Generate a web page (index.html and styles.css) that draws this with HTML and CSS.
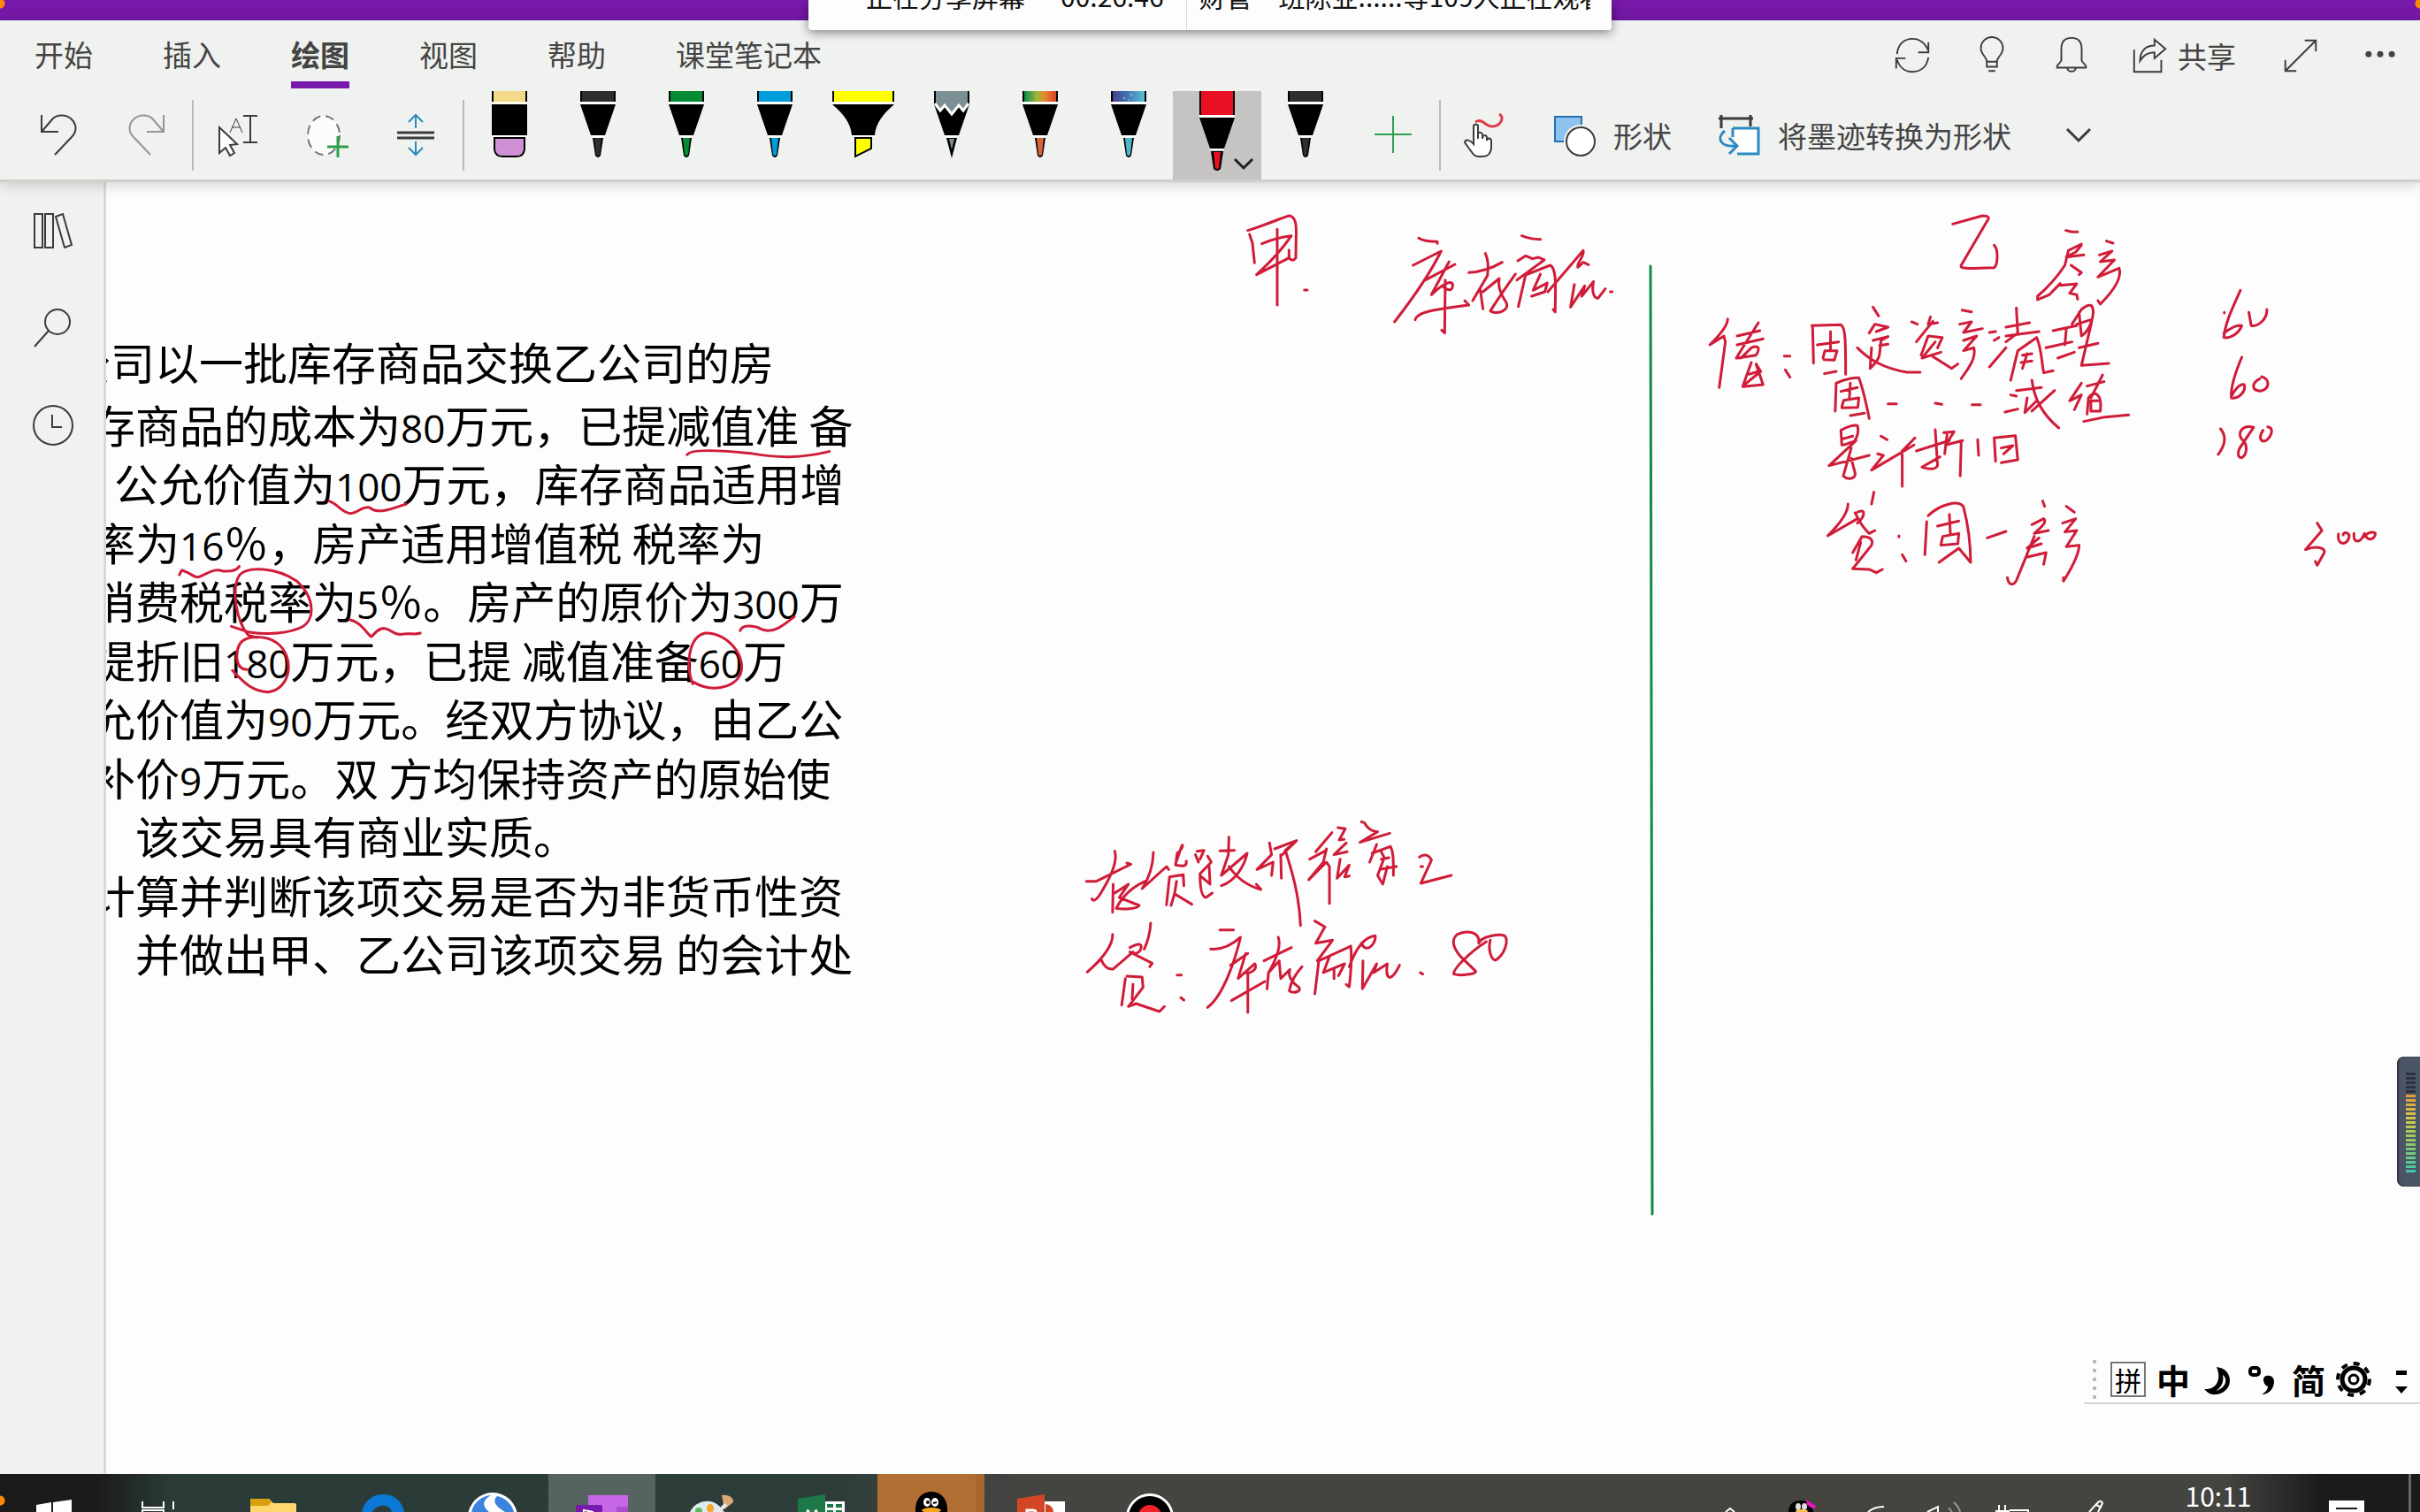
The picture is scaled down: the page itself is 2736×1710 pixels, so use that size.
FILE: index.html
```
<!DOCTYPE html>
<html lang="zh-CN">
<head>
  <meta charset="UTF-8" />
  <meta name="viewport" content="width=device-width, initial-scale=1.0"/>
  <title>OneNote</title>
  <link rel="stylesheet" href="styles.css">
</head>
<body>
  <!-- Shared shapes -->
  <svg class="defs" width="0" height="0">
    <defs>
      <linearGradient id="rainbow"><stop offset="0" stop-color="#0c8a4a"/><stop offset=".4" stop-color="#9fb83a"/><stop offset=".65" stop-color="#e8862c"/><stop offset="1" stop-color="#d8452a"/></linearGradient>
      <linearGradient id="galaxy"><stop offset="0" stop-color="#4a3f8c"/><stop offset=".4" stop-color="#3e6fb0"/><stop offset="1" stop-color="#5cc0d2"/></linearGradient>
      <symbol id="pen" viewBox="0 0 100 100">
        <path d="M30 0H70V12H30Z" fill="#000"/><path d="M32 0H68V12H32Z" fill="currentColor"/>
        <path d="M30 12H70V15H30Z" fill="#fff"/>
        <path d="M30 15H70L58 50H42Z" fill="#000"/>
        <path d="M42 50H58V52H42Z" fill="#fff"/>
        <path d="M44 53H56L53 73Q50 77 47 73Z" fill="#000"/><path d="M46 53H54L52 72Q50 74 48 72Z" fill="currentColor"/>
      </symbol>
    </defs>
  </svg>

  <div class="title-bar"></div>

  <!-- Screen sharing notice -->
  <div class="share-notice">
    <div class="share-text">
      <span>正在分享屏幕</span>
      <span class="share-time">00:26:46</span>
      <span class="share-viewers">财管一班陈业......等109人正在观看</span>
    </div>
  </div>

  <header class="ribbon">
    <div class="tabs">
      <nav class="tab-list">
        <button class="tab">开始</button>
        <button class="tab">插入</button>
        <button class="tab active">绘图</button>
        <button class="tab">视图</button>
        <button class="tab">帮助</button>
        <button class="tab">课堂笔记本</button>
      </nav>
      <div class="tab-actions">
        <button class="action" aria-label="同步"><svg class="icon" viewBox="0 0 48 48"><path d="M6 22C7 10 15 4 24 4C32 4 39 9 43 18M43 8V20H31M43 26C41 38 33 43 24 43C16 43 9 38 6 29M5 39V27H16"/></svg></button>
        <button class="action" aria-label="操作说明"><svg class="icon" viewBox="0 0 48 48"><path d="M18 31C18 25 11 23 11 15A13 13 0 0 1 37 15C37 23 30 25 30 31V37H18ZM18 31H30M20 42H28"/></svg></button>
        <button class="action" aria-label="通知"><svg class="icon" viewBox="0 0 48 48"><path d="M7 38V36L12 30V16C12 7 17 3 24 3S36 7 36 16V30L41 36V38ZM19 38C19 44 29 44 29 38"/></svg></button>
        <button class="share"><svg class="icon" viewBox="0 0 48 48"><path d="M5 17V43H37V29M12 30C12 17 20 12 29 12V5L42 16L29 27V20C21 20 16 23 12 30Z"/></svg>共享</button>
        <button class="action" aria-label="全屏"><svg class="icon" viewBox="0 0 48 48"><path d="M6 42L42 6M29 6H42V19M6 29V42H19"/></svg></button>
        <button class="action more" aria-label="更多"><svg class="icon solid" viewBox="0 0 48 48"><circle cx="9" cy="22" r="4"/><circle cx="24" cy="22" r="4"/><circle cx="39" cy="22" r="4"/></svg></button>
      </div>
    </div>

    <div class="tools">
      <button class="tool" aria-label="撤消"><svg class="icon" viewBox="0 0 48 48"><path d="M5 1V20H24M5 20L17 6C22 0 33 0 39 6C45 12 45 20 39 26L20 46"/></svg></button>
      <button class="tool dim" aria-label="恢复"><svg class="icon" viewBox="0 0 48 48"><path d="M43 1V20H24M43 20L31 6C26 0 15 0 9 6C3 12 3 20 9 26L28 46"/></svg></button>
      <span class="divider"></span>
      <button class="tool" aria-label="选择文本"><svg class="icon" viewBox="0 0 48 48"><path d="M29 2H45M29 32H45M37 2V32"/><path class="thin" d="M14 21L21 5L28 21M16 15H26"/><path fill="#fff" d="M2 15V44L9 38L14 47L19 44L14 35L22 34Z"/></svg></button>
      <button class="tool" aria-label="套索选择"><svg class="icon" viewBox="0 0 48 48"><ellipse cx="20" cy="24" rx="18" ry="22" fill="#fbfcfb" stroke="#777" stroke-dasharray="10 6"/><path d="M24 37H48M36 25V49" stroke="#2f9e4f" stroke-width="3"/></svg></button>
      <button class="tool" aria-label="插入空间"><svg class="icon" viewBox="0 0 48 48"><path d="M3 21H45M3 27H45" stroke-width="3"/><path d="M24 16V1M16 9L24 1L32 9M24 31V46M16 38L24 46L32 38" stroke="#2a8bc0"/></svg></button>
      <span class="divider pens-start"></span>

      <button class="pen" aria-label="橡皮擦"><svg viewBox="0 0 100 100"><path d="M30 0H70V12H30Z"/><path d="M32 0H68V12H32Z" fill="#f5d98b"/><path d="M30 12H70V15H30Z" fill="#fffbe6"/><path d="M30 15H70V50H30Z"/><path d="M30 50H70V52H30Z" fill="#fff"/><path d="M33 53H67V66Q66 74 58 74H42Q34 74 33 66Z" fill="#cf8fd4" stroke="#000" stroke-width="2"/></svg></button>
      <button class="pen black" aria-label="黑色笔"><svg><use href="#pen"/></svg></button>
      <button class="pen green" aria-label="绿色笔"><svg><use href="#pen"/></svg></button>
      <button class="pen blue" aria-label="蓝色笔"><svg><use href="#pen"/></svg></button>
      <button class="pen" aria-label="荧光笔"><svg viewBox="0 0 100 100"><path d="M15 0H85V12H15Z"/><path d="M17 0H83V12H17Z" fill="#ff0"/><path d="M15 12H85V15H15Z" fill="#fff"/><path d="M15 15H85C72 26 64 37 63 50H37C36 37 28 26 15 15Z"/><path d="M37 50H63V52H37Z" fill="#fff"/><path d="M41 53H59V65L41 74Z" fill="#ff0" stroke="#000" stroke-width="2"/></svg></button>
      <button class="pen" aria-label="铅笔"><svg viewBox="0 0 100 100"><path d="M30 0H70V15L58 50H42L30 15Z"/><path d="M32 0H68V15L62 23L58 16L50 27L42 16L38 23L32 15Z" fill="#7c8f94"/><path d="M31 14L37 22L42 16L50 26L58 16L63 22L69 14" fill="none" stroke="#fff" stroke-width="3"/><path d="M42 50H58V52H42Z" fill="#fff"/><path d="M44 53H56L50 76Z"/><path d="M47 54H53L50 66Z" fill="#7c8f94"/></svg></button>
      <button class="pen" aria-label="彩虹笔"><svg class="rainbow"><use href="#pen"/></svg><svg class="cap" viewBox="0 0 36 12"><path d="M0 0H36V12H0Z" fill="url(#rainbow)"/></svg></button>
      <button class="pen" aria-label="银河笔"><svg class="galaxy"><use href="#pen"/></svg><svg class="cap" viewBox="0 0 36 12"><path d="M0 0H36V12H0Z" fill="url(#galaxy)"/><path d="M12 8h2M20 4h2M17 10h1" stroke="#fff"/></svg></button>
      <button class="pen selected" aria-label="红色笔"><svg viewBox="0 0 100 100"><path d="M30 0H70V27H30Z"/><path d="M32 0H68V27H32Z" fill="#e81123"/><path d="M30 27H70V30H30Z" fill="#fff"/><path d="M30 30H70L58 65H42Z"/><path d="M42 65H58V67H42Z" fill="#fff"/><path d="M43 68H57L54 88Q50 92 46 88Z"/><path d="M46 69H54L52 87Q50 89 48 87Z" fill="#e81123"/><path d="M70 77L80 87L90 77" fill="none" stroke="#222" stroke-width="3"/></svg></button>
      <button class="pen black" aria-label="黑色笔"><svg><use href="#pen"/></svg></button>
      <button class="tool" aria-label="添加笔"><svg class="icon" viewBox="0 0 48 48"><path d="M2 23H44M23 2V44" stroke="#2f9e4f"/></svg></button>
      <span class="divider"></span>
      <button class="tool" aria-label="使用触摸绘制"><svg class="icon" viewBox="0 0 48 48"><path fill="#fff" d="M10 34V14C10 11 15 11 15 14V28V23C15 20 20 20 20 24V28C20 23 25 23 25 27V30C26 26 30 27 30 31V37C30 44 26 48 20 48H16C10 48 8 43 5 39L0 32C1 28 6 29 10 34Z"/><path d="M12 9C20 4 23 14 31 14C40 14 46 4 39 0" stroke="#e03c4c" stroke-width="3"/></svg></button>
      <button class="text-tool"><svg class="icon" viewBox="0 0 48 48"><path d="M2 3H32V31H2Z" fill="#8cc3ef" stroke="#2470b0"/><circle cx="31" cy="31" r="19" fill="#f0f2ef" stroke="none"/><circle cx="31" cy="31" r="16" fill="#fff"/></svg>形状</button>
      <button class="text-tool convert"><svg class="icon" viewBox="0 0 48 48"><path d="M4 1V16M37 1V14M1 5H40" stroke-width="3"/><path d="M17 16H46V45H22M17 16V26" fill="#fff" stroke="#2a8bc0" stroke-width="3"/><path d="M8 19C-2 27 3 38 21 36M13 27L22 36L13 45" stroke="#2a8bc0" stroke-width="3"/></svg>将墨迹转换为形状</button>
      <button class="tool" aria-label="更多工具"><svg class="icon" viewBox="0 0 48 48"><path d="M11 17L24 30L37 17" stroke-width="3"/></svg></button>
    </div>
  </header>

  <main class="workspace">
    <nav class="sidebar">
      <button class="side-button" aria-label="笔记本"><svg class="icon" viewBox="0 0 48 48"><path d="M3 5H12V43H3ZM15 5H24V43H15ZM27 8L35 5L45 40L37 43Z"/></svg></button>
      <button class="side-button" aria-label="搜索"><svg class="icon" viewBox="0 0 48 48"><circle cx="29" cy="17" r="14"/><path d="M19 27L3 45"/></svg></button>
      <button class="side-button" aria-label="最近的笔记"><svg class="icon" viewBox="0 0 48 48"><circle cx="24" cy="24" r="22"/><path d="M23 12V26H34"/></svg></button>
    </nav>

    <section class="page">
      <article class="note">
        <p class="lead">公司以一批库存商品交换乙公司的房</p>
        <p>存商品的成本为<span class="num">80</span>万元，已提减值准 备</p>
        <p class="half-indent">公允价值为<span class="num">100</span>万元，库存商品适用增</p>
        <p>率为<span class="num">16</span>％，房产适用增值税 税率为</p>
        <p>消费税税率为<span class="num">5</span>％。房产的原价为<span class="num">300</span>万</p>
        <p>提折旧<span class="num">180</span>万元，已提 减值准备<span class="num">60</span>万</p>
        <p>允价值为<span class="num">90</span>万元。经双方协议，由乙公</p>
        <p>补价<span class="num">9</span>万元。双 方均保持资产的原始使</p>
        <p class="indent">该交易具有商业实质。</p>
        <p>计算并判断该项交易是否为非货币性资</p>
        <p class="indent">并做出甲、乙公司该项交易 的会计处</p>
      </article>

      <!-- Ink layer -->
      <svg class="ink" viewBox="120 206 2616 1461" width="2616" height="1461">
        <path class="green-ink" d="M1866 301L1867 800L1868 1373"/>

        <!-- marks over the note -->
        <g transform="translate(0 200) scale(.6378 .3333)">
          <path d="M1218 943C1225 920 1290 930 1330 938C1380 955 1420 955 1470 932"/>
          <path d="M583 1100C600 1110 605 1140 622 1142C635 1140 640 1118 655 1122C670 1145 690 1130 720 1110"/>
          <path d="M318 1350L322 1335C335 1340 345 1362 352 1358C370 1345 380 1326 395 1338C410 1340 420 1335 424 1322"/>
        </g>
        <g transform="translate(0 640) scale(.6378 .3333)">
          <path d="M410 205L430 218C450 234 500 235 530 212C560 190 560 110 525 50C490 5 440 0 425 30C408 80 420 190 440 235L455 243"/>
          <path d="M620 183C640 190 650 230 658 240C665 230 670 210 682 212C695 215 695 235 712 232C722 226 735 235 745 228"/>
          <path d="M1312 220C1315 200 1335 200 1350 215C1370 232 1390 200 1408 172"/>
          <path d="M438 352C415 350 418 290 425 265C435 235 470 235 490 260C525 310 515 420 475 428C445 425 430 390 412 355"/>
          <path d="M1228 400C1215 340 1220 240 1250 228C1290 225 1325 310 1312 370C1300 415 1260 430 1230 395"/>
        </g>

        <!-- left column heading -->
        <g transform="translate(1380 220) scale(.3333)">
          <path d="M92 122C150 105 190 85 232 72C255 75 258 100 256 150L255 215C247 227 240 224 232 215"/>
          <path d="M98 135L108 165L115 232M140 167Q190 145 240 140Q200 200 122 272L232 215V188M192 118V375M284 324h10"/>
          <path d="M672 148Q690 160 735 160V166M653 240L748 192Q700 290 590 432M695 290L795 237M775 228L715 340C750 305 790 285 787 310C785 330 770 324 758 316M762 290L760 470L750 460M660 425C665 400 720 390 842 375L828 360"/>
          <path d="M842 265Q900 262 955 230M898 200Q912 230 905 275L855 360L880 318L890 388M945 285Q938 320 965 360C990 395 930 410 915 395Q950 340 1000 270M890 330L945 285"/>
          <path d="M1022 140Q1050 152 1085 152M1008 225L1035 208L1058 218L1078 213L1098 222L1005 290M1035 270L1010 380M1030 275L1118 240C1142 250 1135 330 1135 398L1128 390M1085 270L1060 325L1108 300L1100 330L1055 345"/>
          <path d="M1110 330L1230 190C1235 210 1205 235 1212 247L1230 230L1248 238M1200 305L1187 382L1235 310L1225 345L1265 295C1258 325 1265 352 1280 352L1305 320M1322 330h6"/>
        </g>

        <!-- right column entries -->
        <g transform="translate(1900 220) scale(.5332 .3333)">
          <path d="M577 100L640 72C655 72 655 80 650 90L595 240C593 252 600 252 665 248C672 240 675 190 665 172"/>
          <path d="M817 122L830 127H842M850 168L822 190M850 172L838 195L818 212L855 205M822 192L815 240Q790 300 757 345V357L782 340L805 302M828 240L850 265L845 272M805 308L840 303L825 335L840 340L842 355"/>
          <path d="M903 158L917 165M888 205L915 192L890 228L920 222L885 280L930 250C938 290 910 340 890 372L885 360"/>
          <path d="M100 422Q100 450 62 510L92 480L95 500L82 655M120 480L168 462M118 555L165 435M120 510L175 490M128 555L150 520C165 510 170 520 160 545L120 555M150 570L132 650L170 600L160 575L175 645L132 652M145 610L165 600M220 548h12M222 595L232 620"/>
          <path d="M280 450L282 572M278 445L340 442C350 450 350 500 350 610M290 510L335 500M318 465V525M302 555L306 530H332L326 562L304 560M305 608L330 600"/>
          <path d="M408 382L420 412M400 470L412 440L440 450L415 465M408 495L440 482L425 495L422 540M422 512L440 508M405 520L402 590C415 570 422 550 422 540M375 520C400 560 430 590 480 603H508"/>
          <path d="M490 432L502 440M530 415L525 440L545 435M535 430L500 500M510 545L525 480L555 485L545 520M540 500L512 555L552 535M535 550L575 590L588 575"/>
          <path d="M597 392L617 398M592 440L617 432L600 468L640 455M600 495L628 480L600 530L622 520C628 560 605 600 595 625"/>
          <path d="M655 468L668 465M665 495L675 485M655 585L690 520M690 450L740 435M712 385L715 470L690 500M690 480L760 465M700 630L715 530L755 485C765 520 765 560 770 605L790 598M725 545L745 540M722 570L745 565M725 590L735 540"/>
          <path d="M790 462L840 445M818 455L815 510M775 520L830 500M800 555L835 535M830 440L850 390Q865 370 872 378C880 400 870 460 850 480L845 400M840 440L870 425M845 520L885 505M872 430L850 580L908 573"/>
          <path d="M1187 325C1175 370 1155 430 1152 485C1165 490 1185 470 1190 445C1180 440 1165 455 1152 470M1153 400V402M1205 400L1210 445C1225 450 1245 420 1243 390"/>

          <path d="M330 640L328 735M330 640C350 625 370 620 378 622C385 650 395 720 400 760M340 668L375 655M360 640L358 690M342 720L346 698L378 690L376 722L342 724M360 750L390 742M440 710h18M540 708l14 4M618 713h18"/>
          <path d="M700 680L712 684M688 738L715 728M712 665L765 655M735 690L730 740L755 700M745 630C750 700 770 750 802 792M793 665L745 735"/>
          <path d="M850 640L825 700L850 680L835 730M862 650L898 635M895 612L870 690M862 745L865 690C875 665 895 670 890 735L870 735V700H885M855 770L900 755L950 748"/>
          <path d="M1190 552C1180 590 1165 650 1168 690C1185 695 1200 665 1195 645C1185 640 1172 670 1170 680M1228 625C1210 640 1210 665 1230 667C1250 660 1250 625 1232 618"/>

          <path d="M340 800L342 850M340 800C355 785 372 780 375 785C380 810 370 840 362 850M342 830L365 820M345 850L372 835L315 920L400 885M362 860L345 955C355 970 372 965 370 945L362 895"/>
          <path d="M425 820L438 832M418 880L430 885L405 935L495 850M497 826L470 870V990M500 870L570 835M540 798L545 920C540 935 525 932 512 925L550 890"/>
          <path d="M558 808L580 805L562 850L598 835M565 815L560 880M595 840L593 955M630 832L632 885M665 825L668 905M668 825L710 818L715 900L680 910M680 860L705 852L685 880"/>
          <path d="M1145 795C1158 820 1155 850 1140 882M1215 790C1190 780 1180 810 1190 830C1205 850 1200 885 1190 893C1180 893 1180 870 1190 850L1215 790M1235 800C1225 825 1230 840 1240 836C1255 820 1258 790 1245 788"/>

          <path d="M355 1050Q355 1090 312 1158L375 1100M375 1078C390 1065 395 1085 375 1115M370 1080Q385 1130 400 1150L412 1140M410 1010L405 1050M365 1215L385 1160C400 1160 410 1170 405 1190L365 1270L400 1272L415 1283L428 1272M382 1180L372 1240M463 1158v4M470 1222l8 22"/>
          <path d="M522 1110L518 1222M525 1090C550 1050 590 1035 600 1060C608 1110 615 1180 615 1248L590 1200L548 1248M545 1125L590 1108M570 1085L572 1150M552 1188L556 1160L590 1150L588 1185L552 1190M650 1165L690 1143"/>
          <path d="M768 1040L772 1058M745 1120L770 1100C778 1110 765 1130 750 1150L780 1140M760 1165L735 1200L765 1185M750 1160L712 1310C705 1330 695 1325 693 1300M735 1230L775 1215L770 1255"/>
          <path d="M818 1058L835 1078M810 1115L838 1100L815 1145L840 1140L818 1195L845 1190C845 1230 820 1290 812 1312V1300"/>
          <path d="M1350 1115L1360 1140L1325 1205C1350 1190 1368 1200 1365 1215L1350 1258L1346 1245M1395 1152C1390 1190 1415 1195 1418 1158C1415 1145 1405 1145 1405 1155M1428 1150C1425 1185 1442 1185 1450 1150C1458 1185 1475 1165 1473 1148C1462 1142 1455 1150 1448 1162"/>
        </g>

        <!-- lower notes -->
        <g transform="translate(1200 900) scale(.3444 .3333)">
          <path d="M82 290H115L228 232L215 228M175 188Q188 230 135 320C120 350 105 362 100 350M170 300L168 395M175 330L220 300L190 345L255 372C250 385 200 385 180 382Q210 320 275 290"/>
          <path d="M302 192Q300 260 265 315L345 240L352 250M375 230L395 170C400 160 400 180 380 195L375 235C400 240 412 240 410 222M355 275L345 370M355 275L400 268L402 305M378 290L372 330L360 372M375 335L428 368"/>
          <path d="M440 200L450 225M445 188L468 185L455 215M480 205L492 225L455 265C455 310 460 345 475 345L495 330M485 240L488 300L460 275"/>
          <path d="M520 187L568 185M550 140L548 200L525 270L610 195C600 240 570 290 525 305M550 240Q590 300 655 318L640 300"/>
          <path d="M683 160L690 200L642 250L695 225L690 270M720 200L722 280M700 180L772 152L725 200M770 155L735 185C755 250 780 330 785 440"/>
          <path d="M815 215L870 185M888 125L835 190M870 180L860 225L812 285L870 225L880 240V365M908 108L932 112L912 150L928 148M935 160L895 200L938 190M915 215L905 280L945 235L930 275L945 272"/>
          <path d="M985 88L995 92Q1010 120 1038 122L980 158L1078 127M1035 165L1012 225M1020 195L1080 172C1090 190 1090 220 1090 270M1050 190L1060 210L1038 270L1055 300L1070 240M1045 250L1100 240M1050 215L1075 210"/>
          <path d="M1180 240h6M1175 208Q1200 190 1215 218L1180 297L1280 270"/>

          <path d="M168 470Q170 520 85 598L130 555C140 580 155 590 170 588L235 530M225 515Q262 495 262 512C260 535 240 540 225 530L298 568L290 580M293 432Q290 480 272 520M210 620L198 710M215 612L265 615L268 650L220 715L245 705L322 732L338 715M235 640L232 690M380 608h14M392 685l10 8"/>
          <path d="M520 455H565M490 520Q540 525 588 480C570 560 530 680 480 718M555 575L612 535M605 535L580 620L635 570C645 590 620 605 600 600M612 605V735M558 695L668 630"/>
          <path d="M665 560L755 515M712 480Q725 520 680 600L675 655M680 600L715 560L720 620M750 590Q740 620 780 650C790 665 760 672 748 662Q755 620 790 580M720 620L750 590"/>
          <path d="M832 425L865 445L835 500L890 490L840 560M845 560L832 672M845 560L950 510C955 560 950 600 945 648L935 640M880 545L860 600L930 570L910 610M895 590V620"/>
          <path d="M945 580Q980 480 1030 475C1035 500 1000 540 985 500M990 560L988 655L1035 570L1025 600L1070 570C1062 620 1080 640 1110 575M1178 600l8 5"/>
          <path d="M1370 500C1375 460 1330 455 1300 470C1275 490 1290 520 1310 545L1360 595C1365 605 1310 612 1288 605C1285 590 1340 530 1395 495M1408 490C1400 520 1410 555 1425 558C1455 540 1470 490 1455 475C1440 468 1380 475 1370 500"/>
        </g>
      </svg>
    </section>

    <!-- Volume meter docked on the right edge -->
    <div class="meter"><span class="meter-off"></span><span class="meter-on"></span></div>

    <!-- Input method bar -->
    <div class="ime">
      <span class="grip"></span>
      <button class="ime-key boxed">拼</button>
      <button class="ime-key">中</button>
      <button class="ime-key" aria-label="半角"><svg viewBox="0 0 40 40"><path d="M18 6C38 8 38 34 18 37C10 38 7 34 4 31C18 32 24 20 18 6ZM25 15C27 24 22 30 17 33C29 30 31 19 25 15Z" fill-rule="evenodd"/></svg></button>
      <button class="ime-key" aria-label="中文标点"><svg viewBox="0 0 40 40"><rect x="5" y="7" width="10" height="8" rx="3" fill="none" stroke="#000" stroke-width="4"/><path d="M20 20C20 14 32 14 32 22C32 30 27 37 18 37C23 34 25 31 25 28C22 27 20 24 20 20Z"/></svg></button>
      <button class="ime-key">简</button>
      <button class="ime-key" aria-label="设置"><svg viewBox="0 0 40 40"><circle cx="20" cy="20" r="13" fill="none" stroke="#000" stroke-width="5"/><circle cx="20" cy="20" r="18" fill="none" stroke="#000" stroke-width="4" stroke-dasharray="7 7"/><circle cx="20" cy="20" r="5" fill="none" stroke="#000" stroke-width="3"/></svg></button>
      <button class="ime-key last" aria-label="选项"><svg viewBox="0 0 40 40"><path d="M14 10H26V15H14ZM13 28H27L20 36Z"/></svg></button>
    </div>
  </main>

  <footer class="taskbar">
    <div class="apps">
      <button class="app" aria-label="开始菜单"><svg viewBox="0 0 60 43"><path d="M10 35L27 32V43H10ZM29 32L50 29V43H29Z" fill="#fff"/></svg></button>
      <button class="app" aria-label="任务视图"><svg viewBox="0 0 60 43"><path d="M6 31V38H30V31M6 43V41H30V43M41 31V40" fill="none" stroke="#fff" stroke-width="2"/></svg></button>
      <button class="app" aria-label="文件资源管理器"><svg viewBox="0 0 60 43"><path d="M4 28H25L30 33H54Q56 33 56 35V43H4Z" fill="#ffd76e"/><path d="M4 30Q4 28 6 28H24L28 32L24 36H4Z" fill="#d9a00e"/></svg></button>
      <button class="app" aria-label="Edge"><svg viewBox="0 0 60 43"><path d="M6 43C10 28 20 23 31 23C44 23 52 32 54 43H40C37 33 23 34 18 43Z" fill="#0a78d4"/></svg></button>
      <button class="app" aria-label="浏览器"><svg viewBox="0 0 60 43"><circle cx="30" cy="49" r="28" fill="#fff"/><path d="M6 43C9 31 18 25 28 24C18 30 18 36 26 43ZM35 25C45 27 52 35 54 43H44C36 38 28 32 35 25Z" fill="#3c83e0"/></svg></button>
      <button class="app current" aria-label="OneNote"><svg viewBox="0 0 60 43"><path d="M14 24H59V43H14Z" fill="#c667e8"/><path d="M46 37H59V43H46Z" fill="#a94ccd"/><path d="M0 37Q0 35 2 35H28Q30 35 30 37V43H0Z" fill="#7719aa"/><path d="M9 43V41L20 43" stroke="#fff" stroke-width="2"/></svg></button>
      <button class="app" aria-label="画图"><svg viewBox="0 0 60 43"><path d="M5 43C10 31 28 26 38 36L44 43Z" fill="#dcebf0"/><path d="M41 24C50 23 55 28 54 32L44 40Z" fill="#d9a878"/><path d="M46 34L37 43" stroke="#e8e8e8" stroke-width="4"/><ellipse cx="28" cy="39" rx="4" ry="5" fill="#f4a52a"/><circle cx="15" cy="42" r="4" fill="#5db85b"/></svg></button>
      <button class="app" aria-label="Excel"><svg viewBox="0 0 60 43"><path d="M30 31H56V43H30Z" fill="#fff"/><path d="M36 34H43V38H36ZM46 34H53V38H46ZM36 41H43V43H36ZM46 41H53V43H46Z" fill="#1c7846"/><path d="M3 28L34 23V43H3Z" fill="#1c7846"/><path d="M13 41L16 43M25 41L22 43" stroke="#fff" stroke-width="3"/></svg></button>
      <button class="app alert" aria-label="QQ"><svg viewBox="0 0 60 43"><path d="M12 43C11 29 19 20 30 20S49 29 48 43Z"/><ellipse cx="25" cy="32" rx="4" ry="5" fill="#fff"/><ellipse cx="34" cy="32" rx="4" ry="5" fill="#fff"/><circle cx="26" cy="32" r="2"/><path d="M32 33L36 32" stroke="#000" stroke-width="2"/><ellipse cx="30" cy="41" rx="11" ry="3" fill="#f7a51c"/></svg></button>
      <button class="app" aria-label="PowerPoint"><svg viewBox="0 0 60 43"><path d="M30 31H57V43H30Z" fill="#fff"/><path d="M35 34A9 9 0 0 1 44 43H35Z" fill="#d24625"/><path d="M3 28L34 23V43H3Z" fill="#d24625"/><path d="M14 43V41H21Q24 41 24 43" fill="none" stroke="#fff" stroke-width="3"/></svg></button>
      <button class="app" aria-label="录制"><svg viewBox="0 0 60 43"><circle cx="29" cy="49" r="27" fill="#fff"/><circle cx="29" cy="49" r="24"/><circle cx="29" cy="48" r="13" fill="#f5222d"/></svg></button>
    </div>
    <div class="tray">
      <button class="tray-item" aria-label="显示隐藏的图标"><svg viewBox="0 0 60 43"><path d="M25 43L30 39L35 43" fill="none" stroke="#fff" stroke-width="2"/></svg></button>
      <button class="tray-item" aria-label="QQ"><svg viewBox="0 0 60 43"><path d="M14 43C14 35 19 30 28 30S42 35 42 43Z"/><path d="M34 29L45 36L43 40L35 35Z" fill="#e815b8"/><ellipse cx="25" cy="37" rx="3" ry="4" fill="#ddd"/><ellipse cx="32" cy="37" rx="3" ry="4" fill="#ddd"/><ellipse cx="29" cy="42" rx="7" ry="2" fill="#f5c04a"/></svg></button>
      <button class="tray-item" aria-label="网络"><svg viewBox="0 0 60 43"><path d="M22 43Q29 37 40 37" fill="none" stroke="#fff" stroke-width="2"/></svg></button>
      <button class="tray-item" aria-label="音量"><svg viewBox="0 0 60 43"><path d="M7 43L19 37V43" fill="none" stroke="#fff" stroke-width="2"/><path d="M31 38L35 43M37 32Q43 38 44 43" fill="none" stroke="#999" stroke-width="2"/></svg></button>
      <button class="tray-item" aria-label="电源"><svg viewBox="0 0 60 43"><path d="M6 35V41M13 35V41M2 42H18M18 41H39V43" fill="none" stroke="#fff" stroke-width="2"/></svg></button>
      <button class="tray-item" aria-label="Windows Ink"><svg viewBox="0 0 60 43"><path d="M26 43L36 32Q39 29 41 33L36 43M34 35L40 38" fill="none" stroke="#fff" stroke-width="2"/></svg></button>
      <time class="clock">10:11</time>
      <button class="notifications" aria-label="通知中心"><svg viewBox="0 0 60 43"><path d="M10 30H50V43H10Z" fill="#fff"/><path d="M18 39H42" stroke="#1b1b1b" stroke-width="2"/></svg></button>
      <span class="show-desktop"></span>
    </div>
  </footer>
</body>
</html>
```
FILE: styles.css
```
* {
  margin: 0;
  padding: 0;
  box-sizing: border-box;
}

body {
  height: 100vh;
  display: flex;
  flex-direction: column;
  overflow: hidden;
  font-family: 'Noto Sans CJK SC', sans-serif;
  background: #fdfdfd;
  color: #444;
}

button {
  border: 0;
  background: none;
  font: inherit;
  color: inherit;
}

svg {
  display: block;
}

.defs {
  position: absolute;
}

.icon {
  width: 48px;
  height: 48px;
  overflow: visible;
  fill: none;
  stroke: #3b3b3b;
  stroke-width: 2;
}

.icon .thin {
  stroke-width: 1;
}

.icon.solid {
  fill: #444;
  stroke: none;
}

/* Title bar and sharing notice */
.title-bar {
  height: 23px;
  flex: none;
  background: radial-gradient(circle at 0 4px, #ff8a00 5px, transparent 6px), radial-gradient(circle at 100% 4px, #ff8a00 5px, transparent 6px), #7619a8;
}

.share-notice {
  position: absolute;
  z-index: 3;
  top: 0;
  left: 50%;
  width: 908px;
  height: 34px;
  margin-left: -454px;
  padding: 0 24px 0 65px;
  overflow: visible;
  border-radius: 0 0 4px 4px;
  background: #fdfdfd;
  box-shadow: 0 3px 12px rgba(0, 0, 0, 0.45);
}

.share-text {
  display: flex;
  height: 34px;
  overflow: hidden;
  font-size: 30px;
  line-height: 30px;
  white-space: nowrap;
  color: #111;
}

.share-text span {
  margin-top: -20px;
}

.share-time {
  padding: 0 25px 0 40px;
  border-right: 1px solid #ddd;
}

.share-viewers {
  padding-left: 14px;
}

/* Ribbon */
.ribbon {
  position: relative;
  z-index: 2;
  flex: none;
  border-bottom: 3px solid #cfd0cb;
  background: #f0f2ef;
  box-shadow: 0 2px 16px rgba(0, 0, 0, 0.2);
  font-size: 33px;
}

.tabs {
  display: flex;
  justify-content: space-between;
  height: 80px;
}

.tab-list {
  display: flex;
  gap: 79px;
  padding-left: 39px;
}

.tab {
  height: 77px;
  padding-top: 7px;
  border-bottom: 8px solid transparent;
}

.tab.active {
  border-color: #7719aa;
  font-weight: bold;
}

.tab-actions {
  display: flex;
  align-items: center;
}

.action {
  width: 90px;
  display: flex;
  justify-content: center;
}

.tab-actions .icon {
  width: 46px;
  height: 46px;
}

.action .icon.solid {
  width: 42px;
  height: 42px;
}

.share {
  display: flex;
  align-items: center;
  gap: 8px;
  padding: 0 28px 0 21px;
}

.tools {
  display: flex;
  align-items: center;
  height: 100px;
  padding-left: 16px;
}

.tool {
  flex: none;
  width: 100px;
  display: flex;
  justify-content: center;
}

.tool.dim {
  opacity: 0.5;
}

.divider {
  width: 2px;
  height: 80px;
  margin: 0 1px;
  background: #b9bbb8;
}

.pens-start {
  margin-left: 3px;
}

.pen {
  position: relative;
  width: 100px;
  height: 100px;
}

.pen svg {
  width: 100px;
  height: 100px;
}

.pen.selected {
  background: #c6c4c2;
}

.pen .cap {
  position: absolute;
  top: 0;
  left: 32px;
  width: 36px;
  height: 12px;
}

.black { color: #2e2e2e; }
.green { color: #068a34; }
.blue { color: #009ddb; }
.rainbow { color: #d8623a; }
.galaxy { color: #4db5c8; }

.text-tool {
  display: flex;
  align-items: center;
  gap: 20px;
  padding: 0 26px;
}

/* Workspace */
.workspace {
  position: relative;
  flex: 1;
  display: flex;
  min-height: 0;
}

.sidebar {
  width: 120px;
  flex: none;
  display: flex;
  flex-direction: column;
  align-items: center;
  gap: 62px;
  padding: 31px 0 0 3px;
  border-right: 3px solid #d9dad7;
  background: #f0f2ef;
}

.page {
  position: relative;
  flex: 1;
  overflow: hidden;
}

.note {
  margin-left: -17px;
  padding-top: 169px;
  font-size: 50px;
  line-height: 66px;
  white-space: nowrap;
  color: #000;
}

.note p:nth-child(even) {
  margin-top: 1px;
}

.note .lead {
  margin: 0 0 5px -28px;
}

.half-indent {
  padding-left: 26px;
}

.indent {
  padding-left: 50px;
}

.num {
  font-family: 'Open Sans', sans-serif;
  font-size: 44px;
  line-height: 44px;
}

.ink {
  position: absolute;
  top: 0;
  left: 0;
  fill: none;
  stroke: #d01c38;
  stroke-width: 3;
  stroke-linecap: round;
  stroke-linejoin: round;
}

.ink path {
  vector-effect: non-scaling-stroke;
}

.ink .green-ink {
  stroke: #0f8a48;
}

.meter {
  position: absolute;
  right: 0;
  bottom: 325px;
  width: 26px;
  height: 147px;
  padding: 18px 5px 18px 10px;
  border-radius: 8px 0 0 8px;
  background: #4c5566;
  box-shadow: inset 2px 0 2px #30343e;
}

.meter span {
  display: block;
}

.meter-off {
  height: 25px;
  background: repeating-linear-gradient(#2c313c 0 3px, #4c5566 3px 5px);
}

.meter-on {
  height: 88px;
  background: repeating-linear-gradient(transparent 0 3px, #4c5566 3px 5px), linear-gradient(#e09a3c, #d6c64a 30%, #9ccb5c 55%, #3fc9a8);
}

.ime {
  position: absolute;
  right: 0;
  bottom: 79px;
  display: flex;
  align-items: center;
  height: 54px;
  padding-left: 10px;
  border-bottom: 2px solid #d4d4d4;
  color: #000;
}

.grip {
  width: 4px;
  height: 44px;
  margin-right: 16px;
  background: repeating-linear-gradient(#bbb 0 4px, transparent 4px 10px);
}

.ime-key {
  width: 40px;
  height: 40px;
  margin-right: 11px;
  font-size: 38px;
  font-weight: bold;
  line-height: 40px;
}

.ime-key.boxed {
  border: 2px solid #777;
  font-size: 30px;
  font-weight: normal;
  line-height: 36px;
}

.ime-key.last {
  margin: 0 1px 0 3px;
}

/* Taskbar */
.taskbar {
  flex: none;
  display: flex;
  justify-content: space-between;
  height: 43px;
  overflow: hidden;
  background: radial-gradient(circle at 0 70%, #ff8a00 5px, transparent 6px), linear-gradient(90deg, #1b1b1b 4%, #2a3b37 7%, #2d3d3a 34%, #444441 42%, #444441 92%, #1b1b1b 96%);
}

.apps {
  display: flex;
  gap: 3px;
}

.app {
  width: 121px;
  display: flex;
  justify-content: center;
}

.taskbar svg {
  width: 60px;
  height: 43px;
}

.app.current {
  background: #566460;
}

.app.alert {
  border-right: 10px solid #a9652b;
  padding-left: 10px;
  background: #b26f33;
}

.tray {
  display: flex;
}

.tray-item {
  width: 82px;
  display: flex;
  justify-content: center;
}

.clock {
  width: 176px;
  padding: 9px 0 0 26px;
  font-size: 30px;
  line-height: 30px;
  text-align: center;
  color: #fff;
}

.notifications {
  width: 140px;
  display: flex;
  justify-content: center;
}

.show-desktop {
  width: 13px;
  border-left: 3px solid #666;
}
```
